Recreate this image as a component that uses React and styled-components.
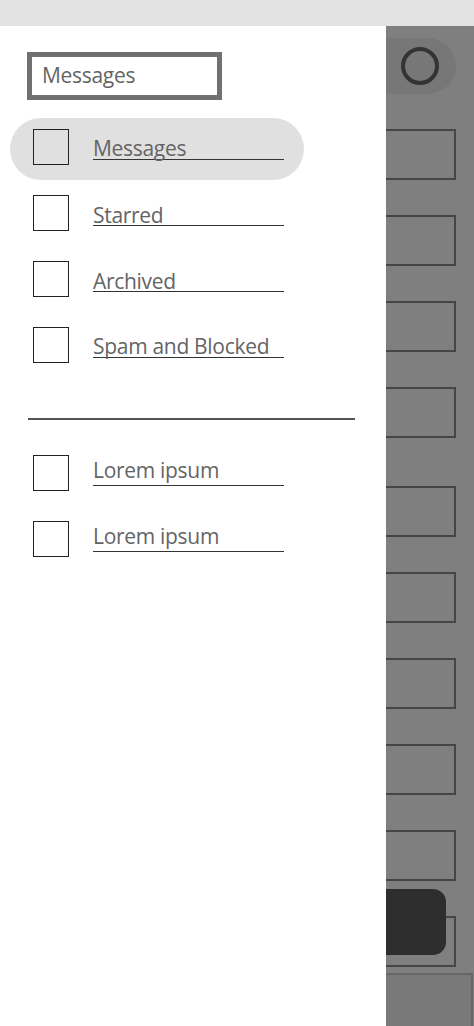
import React from 'react';
import styled, { createGlobalStyle } from 'styled-components';

const GlobalStyle = createGlobalStyle`
  html, body { margin: 0; padding: 0; background: #fff; }
  body { font-family: "Open Sans", "Noto Sans", sans-serif; overflow: hidden; }
  * { box-sizing: border-box; }
`;

const Screen = styled.div`
  width: 474px;
  height: 1026px;
  display: flex;
  flex-direction: column;
  overflow: hidden;
  background: #fff;
`;

const StatusBar = styled.div`
  flex: none;
  height: 26px;
  background: #e3e3e3;
`;

const Main = styled.div`
  position: relative;
  flex: 1;
  overflow: hidden;
`;

/* ---------- page underneath the drawer ---------- */
const Page = styled.div`
  height: 100%;
  display: flex;
  flex-direction: column;
  background: #fff;
`;

const SearchBar = styled.div`
  flex: none;
  margin: 12px 18px 0 18px;
  height: 56px;
  border-radius: 28px;
  background: #eeeeee;
  display: flex;
  align-items: center;
  justify-content: flex-end;
  padding-right: 17px;
`;

const Avatar = styled.div`
  width: 38px;
  height: 38px;
  border-radius: 50%;
  border: 4px solid #666;
`;

const CardList = styled.div`
  flex: none;
  display: flex;
  flex-direction: column;
  gap: 35px;
  margin: ${p => p.$top}px 18px 0 18px;
`;

const Card = styled.div`
  height: 51px;
  border: 2px solid #8a8a8a;
`;

const Fab = styled.div`
  position: absolute;
  right: 28px;
  bottom: 71px;
  width: 140px;
  height: 66px;
  border-radius: 13px;
  background: #5c5c5c;
`;

const BottomBar = styled.div`
  flex: none;
  margin-top: auto;
  width: 473px;
  height: 53px;
  background: #f2f2f2;
  border-top: 2px solid #cccccc;
  border-right: 2px solid #cccccc;
`;

const Scrim = styled.div`
  position: absolute;
  inset: 0;
  background: rgba(0, 0, 0, 0.5);
`;

/* ---------- drawer ---------- */
const Drawer = styled.nav`
  position: absolute;
  top: 0;
  left: 0;
  bottom: 0;
  width: 386px;
  background: #fff;
  display: flex;
  flex-direction: column;
`;

const TitleBox = styled.div`
  margin: 26px 0 0 27px;
  width: 195px;
  height: 48px;
  border: 5px solid #707070;
  padding: 0 0 3px 10px;
  display: flex;
  align-items: center;
  font-size: 21px;
  letter-spacing: -0.3px;
  color: #646464;
`;

const NavList = styled.div`
  display: flex;
  flex-direction: column;
  gap: 4px;
  margin: ${p => p.$top}px 0 0 10px;
`;

const NavRow = styled.div`
  width: 294px;
  height: 62px;
  border-radius: 31px;
  background: ${p => (p.$active ? '#e0e0e0' : 'transparent')};
  padding: 11px 0 0 23px;
  display: flex;
  align-items: flex-start;
  gap: 24px;
`;

const Check = styled.div`
  flex: none;
  width: 36px;
  height: 36px;
  border: 1.5px solid #222;
`;

const Label = styled.div`
  width: 191px;
  height: 30.5px;
  padding-bottom: ${p => p.$lift || 0}px;
  border-bottom: 1.5px solid #333;
  display: flex;
  align-items: flex-end;
  font-size: 21px;
  letter-spacing: -0.3px;
  line-height: 0.9;
  color: #646464;
  white-space: nowrap;
`;

const Divider = styled.hr`
  margin: 40px 0 0 28px;
  width: 327px;
  height: 2px;
  border: none;
  background: #555;
`;

const mainItems = [
  { label: 'Messages', active: true, lift: 1 },
  { label: 'Starred', lift: 0 },
  { label: 'Archived', lift: 0 },
  { label: 'Spam and Blocked', lift: 1 },
];
const extraItems = [
  { label: 'Lorem ipsum', lift: 5 },
  { label: 'Lorem ipsum', lift: 5 },
];

export default function App() {
  return (
    <>
      <GlobalStyle />
      <Screen>
        <StatusBar />
        <Main>
          <Page>
            <SearchBar>
              <Avatar />
            </SearchBar>
            <CardList $top={35}>
              {[0, 1, 2, 3].map(i => <Card key={i} />)}
            </CardList>
            <CardList $top={48}>
              {[0, 1, 2, 3, 4, 5].map(i => <Card key={i} />)}
            </CardList>
            <BottomBar />
          </Page>
          <Fab />
          <Scrim />
          <Drawer>
            <TitleBox>Messages</TitleBox>
            <NavList $top={18}>
              {mainItems.map((it, i) => (
                <NavRow key={i} $active={it.active}>
                  <Check />
                  <Label $lift={it.lift}>{it.label}</Label>
                </NavRow>
              ))}
            </NavList>
            <Divider />
            <NavList $top={24}>
              {extraItems.map((it, i) => (
                <NavRow key={i}>
                  <Check />
                  <Label $lift={it.lift}>{it.label}</Label>
                </NavRow>
              ))}
            </NavList>
          </Drawer>
        </Main>
      </Screen>
    </>
  );
}
